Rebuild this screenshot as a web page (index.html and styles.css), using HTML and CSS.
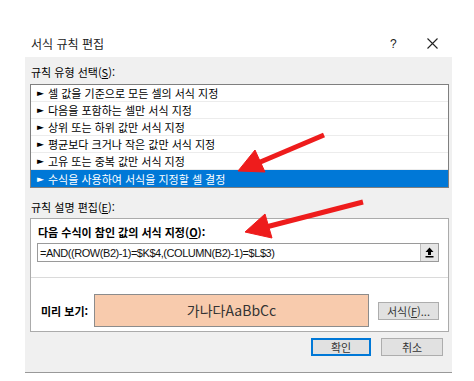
FILE: index.html
```html
<!DOCTYPE html>
<html lang="ko">
<head>
<meta charset="utf-8">
<link rel="stylesheet" href="styles.css">
</head>
<body>
<div class="dialog">
  <div class="titlebar">
    <span class="title">서식 규칙 편집</span>
    <span class="help">?</span>
    <span class="close"><svg width="11" height="11" viewBox="0 0 11 11"><path d="M0.5 0.5 L10.5 10.5 M10.5 0.5 L0.5 10.5" stroke="#222" stroke-width="1.1" fill="none"/></svg></span>
  </div>
  <div class="body">
    <div class="label">규칙 유형 선택(<u>S</u>):</div>
    <ul class="list">
      <li><span class="tri">►</span>셀 값을 기준으로 모든 셀의 서식 지정</li>
      <li><span class="tri">►</span>다음을 포함하는 셀만 서식 지정</li>
      <li><span class="tri">►</span>상위 또는 하위 값만 서식 지정</li>
      <li><span class="tri">►</span>평균보다 크거나 작은 값만 서식 지정</li>
      <li><span class="tri">►</span>고유 또는 중복 값만 서식 지정</li>
      <li class="sel"><span class="tri">►</span>수식을 사용하여 서식을 지정할 셀 결정</li>
    </ul>
    <div class="label label2">규칙 설명 편집(<u>E</u>):</div>
    <div class="desc">
      <div class="desc-top">
        <div class="bold">다음 수식이 참인 값의 서식 지정(<u>O</u>):</div>
        <div class="formula">
          <span class="ftext">=AND((ROW(B2)-1)=$K$4,(COLUMN(B2)-1)=$L$3)</span>
          <span class="fbtn"><svg width="9" height="11" viewBox="0 0 9 11"><path d="M4.5 0.5 L8.5 5 L6 5 L6 8 L3 8 L3 5 L0.5 5 Z" fill="#000"/><rect x="0.5" y="9" width="8" height="1.5" fill="#000"/></svg></span>
        </div>
      </div>
      <div class="preview-row">
        <span class="bold plabel">미리 보기:</span>
        <div class="preview">가나다AaBbCc</div>
        <span class="btn fmt">서식(<u>F</u>)...</span>
      </div>
    </div>
    <div class="buttons">
      <span class="btn ok">확인</span>
      <span class="btn cancel">취소</span>
    </div>
  </div>
</div>
<svg class="arrows" width="474" height="381" viewBox="0 0 474 381">
  <g fill="#ee1c1c" stroke="#ee1c1c">
    <line x1="324" y1="135" x2="258" y2="163" stroke-width="5"/>
    <polygon points="238,171 265,172 255,150" stroke-width="1"/>
    <line x1="363" y1="202" x2="266" y2="227" stroke-width="5"/>
    <polygon points="245,232 272,238 265,214" stroke-width="1"/>
  </g>
</svg>
</body>
</html>
```
FILE: styles.css
```css
html, body {
  margin: 0;
  padding: 0;
  background: #fff;
}
body {
  width: 474px;
  height: 381px;
  overflow: hidden;
  position: relative;
  font-family: "Noto Sans CJK KR", "Noto Sans", sans-serif;
  font-size: 11px;
  color: #000;
}
.dialog {
  padding-top: 30px;
  padding-left: 25px;
  width: 427px;
}
.titlebar {
  height: 27px;
  display: flex;
  align-items: center;
  padding-left: 6px;
  font-size: 12px;
  color: #222;
}
.title {
  flex: 1;
}
.help {
  width: 12px;
  font-size: 12px;
  margin-right: 25px;
  font-family: "Liberation Sans", sans-serif;
}
.close {
  display: flex;
  margin-right: 14px;
}
.body {
  background: #f0f0f0;
  height: 308px;
  border-bottom: 1px solid #999;
  padding: 7px 4px 0 5px;
  box-sizing: content-box;
}
.label {
  height: 16px;
  line-height: 16px;
  padding-left: 1px;
  margin-bottom: 4px;
}
.label2 {
  margin-top: 11px;
  margin-bottom: 3px;
}
.list {
  list-style: none;
  margin: 0;
  padding: 0;
  background: #fff;
  border: 1px solid #7f7f7f;
  width: 417px;
}
.list li {
  height: 16px;
  line-height: 16px;
  border-bottom: 1px solid #ececec;
  padding-left: 6px;
  display: flex;
  align-items: center;
  white-space: nowrap;
}
.list li:last-child {
  border-bottom: 0;
  height: 17px;
}
.list li.sel {
  background: #0078d7;
  color: #fff;
}
.tri {
  font-size: 9px;
  width: 11px;
  font-family: "DejaVu Sans", sans-serif;
}
.desc {
  background: #fff;
  border: 1px solid #ababab;
  width: 417px;
}
.desc-top {
  padding: 5px 9px 15px 6px;
  border-bottom: 1px solid #dadada;
}
.bold {
  font-weight: bold;
  line-height: 16px;
  padding-left: 1px;
}
.formula {
  margin-top: 3px;
  height: 17px;
  border: 1px solid #9a9a9a;
  display: flex;
  align-items: center;
  justify-content: space-between;
  padding-left: 2px;
}
.ftext {
  font-family: "Liberation Sans", sans-serif;
  font-size: 11px;
  letter-spacing: -0.45px;
  color: #111;
}
.fbtn {
  width: 17px;
  height: 17px;
  background: #e6e6e6;
  border-left: 1px solid #bcbcbc;
  display: flex;
  align-items: center;
  justify-content: center;
}
.preview-row {
  display: flex;
  align-items: center;
  padding: 16px 0 4px 9px;
}
.plabel {
  width: 53px;
}
.preview {
  width: 273px;
  border: 1px solid #8c8c8c;
  background: #f8cbad;
  display: flex;
  align-items: center;
  justify-content: center;
  font-size: 14px;
  color: #333;
  padding-bottom: 1px;
  box-sizing: content-box;
  height: 30px;
}
.btn {
  display: flex;
  align-items: center;
  justify-content: center;
  background: #e1e1e1;
  border: 1px solid #adadad;
  box-sizing: border-box;
  color: #333;
}
.fmt {
  width: 61px;
  height: 18px;
  margin-left: 9px;
}
.buttons {
  display: flex;
  justify-content: flex-end;
  margin-top: 6px;
  padding-right: 5px;
  gap: 10px;
}
.ok {
  width: 60px;
  height: 18px;
  border: 2px solid #0078d7;
}
.cancel {
  width: 62px;
  height: 18px;
}
.arrows {
  position: absolute;
  left: 0;
  top: 0;
  pointer-events: none;
}
```
